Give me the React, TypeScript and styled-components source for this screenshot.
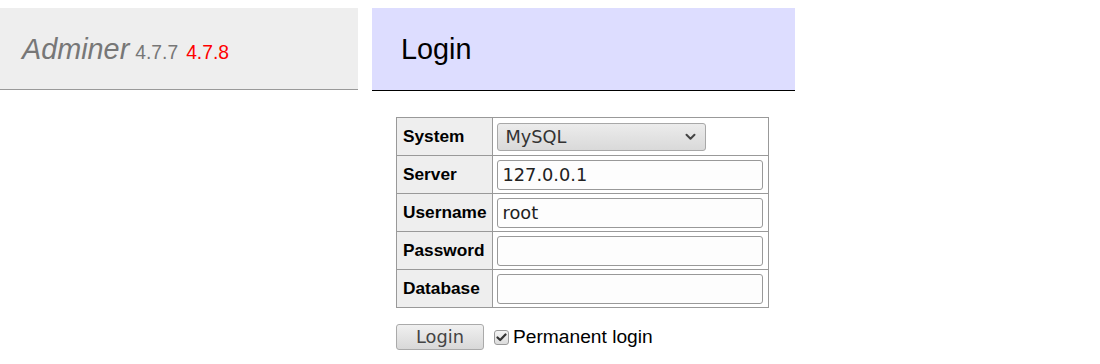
import React from "react";
import styled, { createGlobalStyle } from "styled-components";

const Global = createGlobalStyle`
  *, *::before, *::after { box-sizing: border-box; }
  html, body { margin: 0; padding: 0; background: #fff; }
  body {
    font-family: "Liberation Sans", Arial, Helvetica, sans-serif;
    font-size: 19.2px;
    line-height: 1.25;
    color: #000;
  }
`;

const Page = styled.div`
  display: flex;
  align-items: flex-start;
  padding-top: 8px;
  width: 1100px;
  height: 364px;
`;

const Menu = styled.div`
  width: 358px;
  flex: none;
`;

const Brand = styled.h1`
  margin: 0;
  padding: 23px 22px 22px;
  height: 82px;
  background: #eee;
  border-bottom: 1px solid #999;
  font-size: 28.8px;
  line-height: 36px;
  font-weight: normal;
  font-style: italic;
  color: #777;
  white-space: nowrap;
`;

const Version = styled.span<{ $new?: boolean }>`
  font-style: normal;
  font-size: 19.3px;
  color: ${(p) => (p.$new ? "#f00" : "#777")};
  margin-left: ${(p) => (p.$new ? "8px" : "6px")};
`;

const Content = styled.div`
  margin-left: 14px;
  width: 423px;
  flex: none;
`;

const Title = styled.h2`
  margin: 0 0 26px;
  padding: 23px 29px 22px;
  height: 83px;
  background: #ddf;
  border-bottom: 1px solid #000;
  font-size: 28.8px;
  line-height: 36px;
  font-weight: normal;
  color: #000;
`;

const Form = styled.form`
  padding-left: 24px;
`;

const Table = styled.table`
  border-collapse: collapse;
  font-size: 17.28px;
  margin: 0;
`;

const Row = styled.tr`
  height: 38px;
`;

const Label = styled.th`
  border: 1px solid #999;
  background: #eee;
  padding: 0 5px 0 6px;
  text-align: left;
  font-weight: bold;
  white-space: nowrap;
`;

const Cell = styled.td`
  border: 1px solid #999;
  background: #fff;
  padding: 0 5px 0 4px;
  vertical-align: middle;
`;

const controlFont = `
  font-family: "DejaVu Sans", Verdana, sans-serif;
  font-size: 17.78px;
`;

const Input = styled.input`
  display: block;
  width: 266px;
  height: 30px;
  margin: 0;
  padding: 0 5px;
  border: 1px solid #999;
  border-radius: 3px;
  background: #fdfdfd;
  color: #222;
  ${controlFont}
  outline: none;
`;

const SelectWrap = styled.div`
  position: relative;
  width: 209px;
  height: 28px;
`;

const Select = styled.select`
  appearance: none;
  -webkit-appearance: none;
  display: block;
  width: 209px;
  height: 28px;
  margin: 0;
  padding: 0 8px;
  border: 1px solid #a8a8a8;
  border-radius: 3px;
  background: linear-gradient(#ececec, #d9d9d9);
  color: #333;
  ${controlFont}
`;

const Chevron = styled.svg`
  position: absolute;
  right: 10px;
  top: 10px;
  width: 11px;
  height: 8px;
  pointer-events: none;
`;

const Actions = styled.p`
  display: flex;
  align-items: center;
  margin: 16px 0 0;
`;

const Button = styled.button`
  width: 88px;
  height: 26px;
  margin: 0;
  padding: 0;
  border: 1px solid #aaa;
  border-radius: 3px;
  background: linear-gradient(#f0f0f0, #d8d8d8);
  color: #444;
  ${controlFont}
  line-height: 22px;
`;

const CheckLabel = styled.label`
  display: flex;
  align-items: center;
  gap: 4px;
  margin-left: 10px;
  font-size: 19.2px;
  color: #000;
`;

const CheckBox = styled.span`
  display: inline-flex;
  align-items: center;
  justify-content: center;
  width: 15px;
  height: 15px;
  border: 1px solid #9a9a9a;
  border-radius: 3px;
  background: linear-gradient(#f4f4f4, #dcdcdc);
`;

const fields = [
  { label: "Server", value: "127.0.0.1", type: "text" },
  { label: "Username", value: "root", type: "text" },
  { label: "Password", value: "", type: "password" },
  { label: "Database", value: "", type: "text" },
];

export default function App() {
  return (
    <>
      <Global />
      <Page>
        <Menu>
          <Brand>
            Adminer<Version>4.7.7</Version>
            <Version $new>4.7.8</Version>
          </Brand>
        </Menu>
        <Content>
          <Title>Login</Title>
          <Form onSubmit={(e) => e.preventDefault()}>
            <Table>
              <tbody>
                <Row>
                  <Label>System</Label>
                  <Cell>
                    <SelectWrap>
                      <Select defaultValue="server">
                        <option value="server">MySQL</option>
                        <option value="sqlite">SQLite 3</option>
                        <option value="pgsql">PostgreSQL</option>
                      </Select>
                      <Chevron viewBox="0 0 11 8">
                        <path
                          d="M1.5 1.8 L5.5 5.8 L9.5 1.8"
                          fill="none"
                          stroke="#444"
                          strokeWidth="2"
                          strokeLinecap="round"
                          strokeLinejoin="round"
                        />
                      </Chevron>
                    </SelectWrap>
                  </Cell>
                </Row>
                {fields.map((f) => (
                  <Row key={f.label}>
                    <Label>{f.label}</Label>
                    <Cell>
                      <Input type={f.type} defaultValue={f.value} />
                    </Cell>
                  </Row>
                ))}
              </tbody>
            </Table>
            <Actions>
              <Button type="submit">Login</Button>
              <CheckLabel>
                <CheckBox>
                  <svg width="11" height="9" viewBox="0 0 11 9">
                    <path
                      d="M1.5 4.5 L4.2 7 L9.5 1.5"
                      fill="none"
                      stroke="#333"
                      strokeWidth="2.2"
                      strokeLinecap="round"
                      strokeLinejoin="round"
                    />
                  </svg>
                </CheckBox>
                Permanent login
              </CheckLabel>
            </Actions>
          </Form>
        </Content>
      </Page>
    </>
  );
}
